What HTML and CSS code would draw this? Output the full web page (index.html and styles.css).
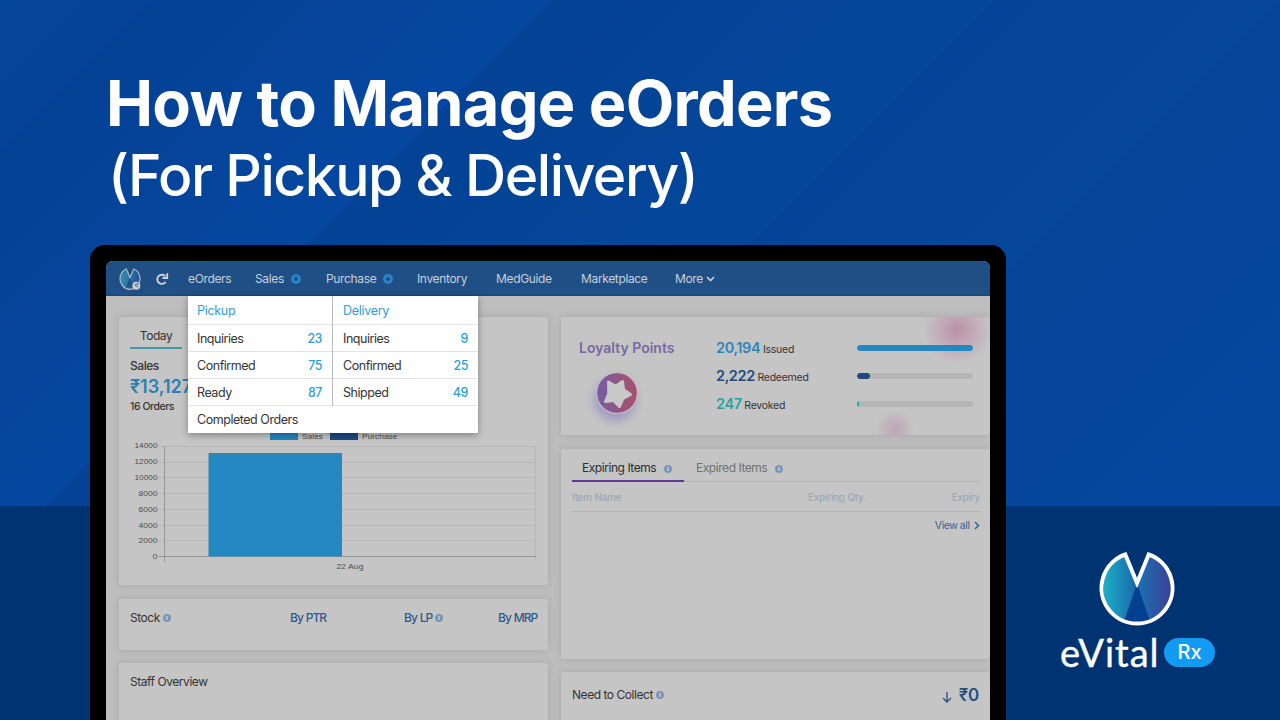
FILE: index.html
```html
<!DOCTYPE html>
<html lang="en">
<head>
<meta charset="utf-8">
<title>How to Manage eOrders</title>
<link rel="stylesheet" href="styles.css">
</head>
<body>

<div class="cover">
  <div class="cover-main">
    <h1>How to Manage eOrders</h1>
    <h2>(For Pickup &amp; Delivery)</h2>

    <div class="laptop">
      <div class="screen">
        <div class="navbar">
          <svg class="nav-logo" width="22" height="24" viewBox="0 0 22 24">
            <defs>
              <linearGradient id="navGrad"><stop offset="0" stop-color="#3191b3"/><stop offset="1" stop-color="#25508f"/></linearGradient>
            </defs>
            <path d="M7.3 1.9 L11 10.5 L14.7 1.9 A10 10.6 0 1 1 7.3 1.9Z" fill="url(#navGrad)" stroke="#b3bfca" stroke-width="1.1"/>
            <path d="M11 10.5 L15 20.5 L7 20.5Z" fill="#204f88"/>
            <circle cx="17.3" cy="18.7" r="4" fill="#c9cdd0"/>
            <path d="M15.6 16.8l1.2 2.2 2.2 1.2M17 16.9h2v1.5" fill="none" stroke="#41678f" stroke-width="1"/>
          </svg>
          <svg class="refresh" width="14" height="14" viewBox="0 0 14 14">
            <path d="M10.300 4.200A4.600 4.600 0 1 0 10.600 10" fill="none" stroke="#cdd3d9" stroke-width="1.900"/>
            <path d="M7.500 6H12.200V1.300" fill="none" stroke="#cdd3d9" stroke-width="1.900"/>
          </svg>
          <span>eOrders</span>
          <span>Sales <i class="plus"></i></span>
          <span>Purchase <i class="plus"></i></span>
          <span class="inventory">Inventory</span>
          <span>MedGuide</span>
          <span>Marketplace</span>
          <span>More <svg class="caret" width="9" height="6" viewBox="0 0 9 6"><path d="M1 1l3.5 3.5L8 1" fill="none" stroke="#cdd3d9" stroke-width="1.6"/></svg></span>
        </div>

        <div class="menu">
          <div class="menu-cols">
            <div class="menu-col">
              <div class="menu-row menu-head">Pickup</div>
              <div class="menu-row">Inquiries <b>23</b></div>
              <div class="menu-row">Confirmed <b>75</b></div>
              <div class="menu-row">Ready <b>87</b></div>
            </div>
            <div class="menu-col">
              <div class="menu-row menu-head">Delivery</div>
              <div class="menu-row">Inquiries <b>9</b></div>
              <div class="menu-row">Confirmed <b>25</b></div>
              <div class="menu-row">Shipped <b>49</b></div>
            </div>
          </div>
          <div class="menu-row menu-last">Completed Orders</div>
        </div>

        <div class="dashboard">
          <div class="column">
            <div class="card sales">
              <div class="today">Today</div>
              <div class="sales-label">Sales</div>
              <div class="amount">₹13,127</div>
              <div class="orders">16 Orders</div>
              <svg class="chart" width="418" height="150" viewBox="130 425 418 150">
                <rect x="270" y="431" width="28" height="9" fill="#2585bd"/>
                <rect x="330" y="431" width="28" height="9" fill="#1f4a83"/>
                <text x="302" y="439" textLength="21" lengthAdjust="spacingAndGlyphs">Sales</text>
                <text x="362" y="439" textLength="35.5" lengthAdjust="spacingAndGlyphs">Purchase</text>
                <g class="grid">
                  <path d="M158.500 446.500H536M158.500 462.500H536M158.500 477.500H536M158.500 493.500H536M158.500 509.500H536M158.500 525.500H536M158.500 540.500H536M535.500 446V560"/>
                </g>
                <path class="axis" d="M158.500 556.500H536M164.500 446V562"/>
                <rect x="208.500" y="453" width="133.500" height="103.500" fill="#2588c0"/>
                <text x="134.500" y="448" textLength="23" lengthAdjust="spacingAndGlyphs">14000</text>
                <text x="134.500" y="464" textLength="23" lengthAdjust="spacingAndGlyphs">12000</text>
                <text x="134.500" y="480" textLength="23" lengthAdjust="spacingAndGlyphs">10000</text>
                <text x="138.500" y="496" textLength="19" lengthAdjust="spacingAndGlyphs">8000</text>
                <text x="138.500" y="511.500" textLength="19" lengthAdjust="spacingAndGlyphs">6000</text>
                <text x="138.500" y="527.500" textLength="19" lengthAdjust="spacingAndGlyphs">4000</text>
                <text x="138.500" y="543" textLength="19" lengthAdjust="spacingAndGlyphs">2000</text>
                <text x="152.500" y="559" textLength="5" lengthAdjust="spacingAndGlyphs">0</text>
                <text x="336.500" y="569" textLength="27" lengthAdjust="spacingAndGlyphs">22 Aug</text>
              </svg>
            </div>
            <div class="card stock">
              <span>Stock <i class="info"></i></span>
              <span class="link">By PTR</span>
              <span class="link">By LP <i class="info"></i></span>
              <span class="link mrp">By MRP</span>
            </div>
            <div class="card staff">Staff Overview</div>
          </div>

          <div class="column">
            <div class="card loyalty">
              <div class="loyalty-left">
                <div class="loyalty-title">Loyalty Points</div>
                <svg class="badge" width="42" height="42" viewBox="0 0 42 42">
                  <defs>
                    <linearGradient id="badgeGrad"><stop offset="0" stop-color="#755ca4"/><stop offset="1" stop-color="#ab5068"/></linearGradient>
                  </defs>
                  <circle cx="21" cy="21" r="20.300" fill="url(#badgeGrad)" stroke="#c3b8c9" stroke-width="1"/>
                  <path d="M12.500 10 L19.700 14.200 L26.500 9.500 L27.600 17.800 L34.500 22.500 L26.800 26.600 L23.500 34.500 L17.500 28.500 L9.500 29.500 L12.800 21.500Z" fill="#c8c8c8" stroke="#c8c8c8" stroke-width="3" stroke-linejoin="round"/>
                </svg>
              </div>
              <div class="points">
                <div class="point"><span><b class="issued">20,194</b> Issued</span><i class="bar"><i class="fill fill-issued"></i></i></div>
                <div class="point"><span><b class="redeemed">2,222</b> Redeemed</span><i class="bar"><i class="fill fill-redeemed"></i></i></div>
                <div class="point"><span><b class="revoked">247</b> Revoked</span><i class="bar"><i class="fill fill-revoked"></i></i></div>
              </div>
            </div>
            <div class="card items">
              <div class="tabs">
                <span class="tab active">Expiring Items <i class="info"></i></span>
                <span class="tab">Expired Items <i class="info"></i></span>
              </div>
              <div class="table-head"><span>Item Name</span><span>Expiring Qty.</span><span>Expiry</span></div>
              <div class="view-all">View all <svg width="6" height="9" viewBox="0 0 6 9"><path d="M1 1l3.500 3.500L1 8" fill="none" stroke="#3a648d" stroke-width="1.500"/></svg></div>
            </div>
            <div class="card collect">
              <span>Need to Collect <i class="info"></i></span>
              <span class="due">
                <svg width="10" height="12" viewBox="0 0 10 12"><path d="M5 1v10M1 7l4 4 4-4" fill="none" stroke="#2c5687" stroke-width="1.400"/></svg>
                <b>₹0</b>
              </span>
            </div>
          </div>
        </div>
      </div>
    </div>
  </div>

  <div class="brand">
    <svg width="78" height="76" viewBox="0 0 78 76">
      <defs>
        <linearGradient id="brandLeft"><stop offset="0" stop-color="#1bafc6"/><stop offset="1" stop-color="#1b67aa"/></linearGradient>
        <linearGradient id="brandRight"><stop offset="0" stop-color="#1b72b3"/><stop offset="1" stop-color="#3b4199"/></linearGradient>
      </defs>
      <path d="M27 4 L39 33 L27 70 A36 36 0 0 1 27 4Z" fill="url(#brandLeft)"/>
      <path d="M51 4 L39 33 L51 70 A36 36 0 0 0 51 4Z" fill="url(#brandRight)"/>
      <path d="M26 3 L39 36 L52 3 L52 70 L39 37 L26 70Z" fill="none"/>
      <path d="M39 33 L52 70 Q39 76 26 70Z" fill="#03408f"/>
      <path d="M27.300 3.500 A35.500 35.500 0 1 0 50.700 3.500 L39 32Z" fill="none" stroke="#fff" stroke-width="4"/>
    </svg>
    <div class="brand-name"><span class="name">eVital</span><span class="rx">Rx</span></div>
  </div>
</div>

</body>
</html>
```
FILE: styles.css
```css
* {
  box-sizing: border-box;
}

body {
  margin: 0;
  font-family: Inter, "Noto Sans", sans-serif;
}

.cover {
  width: 1280px;
  height: 720px;
  overflow: hidden;
  display: flex;
  background:
    linear-gradient(#003371, #003371) 0 506px / 1280px 214px no-repeat,
    linear-gradient(135deg, #03459a 0%, #034498 8.5%, #034194 8.5%, #0547a1 30.8%, #034295 30.8%, #04479a 55.7%, #044497 55.7%, #05479c 71.7%, #04459a 71.7%, #05479f 100%) 0 0 / 1280px 506px no-repeat;
}

.cover-main {
  width: 1006px;
  padding: 68px 0 0 90px;
}

h1,
h2 {
  margin: 0;
  color: #fff;
  white-space: nowrap;
}

h1 {
  padding-left: 16px;
  font-size: 63px;
  line-height: 70px;
  font-weight: 700;
  letter-spacing: -0.7px;
}

h2 {
  padding-left: 18px;
  font-size: 57px;
  line-height: 76px;
  font-weight: 450;
  letter-spacing: -1.45px;
}

.laptop {
  width: 916px;
  height: 475px;
  margin-top: 31px;
  padding: 16px 16px 0;
  background: #000;
  border-radius: 15px 15px 0 0;
}

.screen {
  position: relative;
  height: 459px;
  overflow: hidden;
  background: #bebebe;
  border-radius: 7px 7px 0 0;
  color: #343434;
  font-size: 12px;
  letter-spacing: -0.45px;
}

.navbar {
  display: grid;
  grid-template-columns: 37px 32px 67px 71px 91px 79px 85px 94px auto;
  align-items: center;
  height: 35px;
  padding: 1px 0 0 13px;
  background: #204f86;
  border-bottom: 1px solid #1b4577;
  color: #c5cfd9;
  letter-spacing: -0.35px;
  white-space: nowrap;
}

.refresh {
  margin-left: -1px;
}

.plus {
  display: inline-block;
  width: 10px;
  height: 10px;
  margin-left: 4px;
  border-radius: 50%;
  vertical-align: -1px;
  background:
    linear-gradient(#204f86, #204f86) center / 4px 2px no-repeat,
    linear-gradient(#204f86, #204f86) center / 2px 4px no-repeat,
    #2a83c5;
}

.caret {
  vertical-align: 1px;
}

.menu {
  position: absolute;
  z-index: 2;
  left: 82px;
  top: 35px;
  width: 290px;
  height: 137px;
  background: #fff;
  box-shadow: 0 2px 7px rgba(0, 0, 0, 0.35);
  font-size: 12.5px;
  letter-spacing: -0.46px;
}

.menu-cols {
  display: grid;
  grid-template-columns: 145px 145px;
}

.menu-col:first-child {
  border-right: 1px solid #bbb;
}

.menu-row {
  display: flex;
  justify-content: space-between;
  align-items: center;
  height: 27px;
  padding: 1px 10px 0 9px;
  border-bottom: 1px solid #e3e3e3;
}

.menu-col:last-child .menu-row {
  padding-left: 10px;
}

.menu-head {
  height: 29px;
  color: #2fa0d8;
  letter-spacing: -0.3px;
}

.menu-row b {
  font-weight: 500;
  color: #319fd3;
}

.menu-last {
  height: 26px;
  border: 0;
}

.dashboard {
  display: grid;
  grid-template-columns: 429px 429px;
  gap: 13px;
  padding: 21px 0 0 13px;
}

.column {
  display: flex;
  flex-direction: column;
  gap: 14px;
}

.card {
  background: #c5c5c5;
  border-radius: 2px;
  box-shadow: 0 0 8px rgba(0, 0, 0, 0.13);
}

.sales {
  height: 268px;
  padding: 8px 0 0 11px;
}

.today {
  width: 52px;
  line-height: 22px;
  text-align: center;
  border-bottom: 2px solid #4798a7;
}

.sales-label {
  margin-top: 8px;
  line-height: 18px;
  font-weight: 500;
}

.amount {
  line-height: 24px;
  font-size: 18px;
  font-weight: 600;
  letter-spacing: 0;
  color: #2a80b5;
}

.orders {
  line-height: 16px;
  font-size: 10.5px;
  font-weight: 500;
}

.chart {
  display: block;
  margin-top: 10px;
}

.chart text {
  font-family: "Liberation Sans", sans-serif;
  font-size: 7.8px;
  letter-spacing: 0;
  fill: #4e4e4e;
}

.grid path {
  fill: none;
  stroke: #b8b8b8;
}

.axis {
  fill: none;
  stroke: #969696;
}

.info {
  display: inline-block;
  width: 8px;
  height: 8px;
  border-radius: 50%;
  vertical-align: 0;
  background: linear-gradient(#b0bccb, #b0bccb) center / 2px 4px no-repeat, #7c96b9;
}

.stock {
  display: grid;
  grid-template-columns: 160px 114px 95px auto;
  height: 51px;
  padding: 9px 0 0 11px;
  line-height: 19px;
}

.link {
  color: #31598a;
  letter-spacing: -0.95px;
  word-spacing: 0.5px;
  font-weight: 500;
}

.mrp {
  margin-left: -1px;
}

.staff {
  height: 70px;
  margin-top: -1px;
  padding: 9px 11px;
  line-height: 20px;
}

.loyalty {
  display: grid;
  grid-template-columns: 155px auto;
  height: 118px;
  background:
    radial-gradient(circle at 396px 13px, rgba(174, 92, 142, 0.5), rgba(185, 110, 145, 0.35) 14px, transparent 34px),
    radial-gradient(circle at 334px 112px, rgba(174, 112, 150, 0.35), rgba(185, 130, 160, 0.25) 10px, transparent 19px),
    #c5c5c5;
}

.loyalty-title {
  padding: 21px 0 0 18px;
  line-height: 20px;
  font-size: 14px;
  font-weight: 600;
  letter-spacing: 0;
  color: #7769a4;
}

.badge {
  display: block;
  margin: 14px 0 0 35px;
  border-radius: 50%;
  box-shadow: -2px 7px 10px rgba(105, 90, 190, 0.4);
}

.points {
  padding-top: 17px;
}

.point {
  display: grid;
  grid-template-columns: 141px 116px;
  align-items: center;
  height: 28px;
  font-size: 10.5px;
  line-height: 28px;
  letter-spacing: -0.25px;
}

.point b {
  font-size: 14.5px;
  font-weight: 600;
  letter-spacing: -0.4px;
}

.issued {
  color: #2a86be;
}

.redeemed {
  color: #214a7c;
}

.revoked {
  color: #25a3a5;
}

.bar {
  height: 6px;
  margin-top: -2px;
  border-radius: 3px;
  overflow: hidden;
  background: #b5b5b5;
}

.fill {
  display: block;
  height: 6px;
  border-radius: 3px;
}

.fill-issued {
  width: 100%;
  background: #2587c2;
}

.fill-redeemed {
  width: 13px;
  background: #1f4a80;
}

.fill-revoked {
  width: 2px;
  background: #28a4a6;
}

.items {
  height: 210px;
  padding: 0 10px 0 11px;
}

.tabs {
  display: flex;
  height: 33px;
  border-bottom: 1px solid #b2b2b2;
  line-height: 37px;
  color: #707070;
}

.tab {
  height: 33px;
  margin-right: 12px;
}

.tab .info {
  margin-left: 5px;
  vertical-align: -1px;
}

.active {
  width: 112px;
  padding-left: 10px;
  border-bottom: 2px solid #5b3b91;
  color: #2e2e2e;
}

.table-head {
  display: grid;
  grid-template-columns: 236px 60px auto;
  height: 30px;
  border-bottom: 1px solid #b2b2b2;
  line-height: 30px;
  font-size: 10px;
  letter-spacing: -0.2px;
  color: #9aa3b2;
  white-space: nowrap;
}

.table-head span:last-child {
  text-align: right;
}

.view-all {
  line-height: 27px;
  text-align: right;
  font-size: 10.5px;
  color: #3a648d;
}

.view-all svg {
  margin-left: 2px;
  vertical-align: -1px;
}

.collect {
  display: flex;
  justify-content: space-between;
  height: 60px;
  margin-top: -1px;
  padding: 10px 11px;
  line-height: 26px;
}

.due svg {
  vertical-align: -2px;
}

.due b {
  margin-left: 4px;
  font-size: 17px;
  font-weight: 600;
  letter-spacing: -0.2px;
  color: #254f82;
}

.brand {
  width: 274px;
  padding: 551px 0 0 54px;
}

.brand > svg {
  display: block;
  margin-left: 38px;
}

.brand-name {
  display: flex;
  align-items: center;
  margin-top: 5px;
  color: #fff;
}

.name {
  width: 104px;
  font-family: Lato, sans-serif;
  font-size: 38px;
  line-height: 40px;
  letter-spacing: 1px;
  -webkit-text-stroke: 0.4px #fff;
}

.rx {
  width: 51px;
  height: 29px;
  border-radius: 15px;
  background: #129af5;
  text-align: center;
  font-size: 20px;
  line-height: 29px;
  font-weight: 500;
}
```
